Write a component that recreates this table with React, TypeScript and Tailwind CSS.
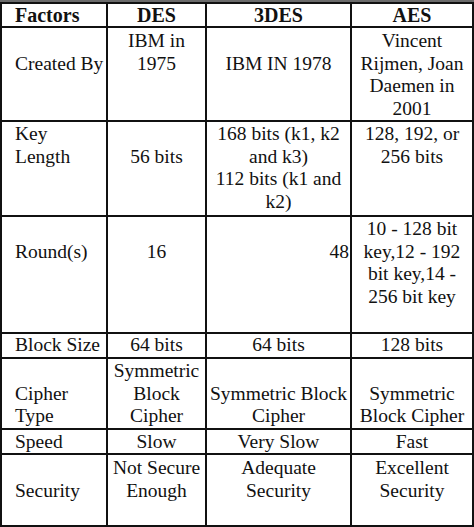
import React from "react";

type Cell = { lines: string[]; align?: "left" | "center" | "right" };
type Row = { pad: string; cells: Cell[]; header?: boolean };

const L = (...lines: string[]): Cell => ({ lines, align: "left" });
const C = (...lines: string[]): Cell => ({ lines, align: "center" });
const R = (...lines: string[]): Cell => ({ lines, align: "right" });

const rows: Row[] = [
  { pad: "pt-0", header: true, cells: [L("Factors"), C("DES"), C("3DES"), C("AES")] },
  {
    pad: "pt-[2px]",
    cells: [
      L("", "Created By"),
      C("IBM in", "1975"),
      C("", "IBM IN 1978"),
      C("Vincent", "Rijmen, Joan", "Daemen in", "2001"),
    ],
  },
  {
    pad: "pt-[1px]",
    cells: [
      L("Key", "Length"),
      C("", "56 bits"),
      C("168 bits (k1, k2", "and k3)", "112 bits (k1 and", "k2)"),
      C("128, 192, or", "256 bits"),
    ],
  },
  {
    pad: "pt-[1px]",
    cells: [
      L("", "Round(s)"),
      C("", "16"),
      R("", "48"),
      C("10 - 128 bit", "key,12 - 192", "bit key,14 -", "256 bit key"),
    ],
  },
  { pad: "pt-0", cells: [L("Block Size"), C("64 bits"), C("64 bits"), C("128 bits")] },
  {
    pad: "pt-[1px]",
    cells: [
      L("", "Cipher", "Type"),
      C("Symmetric", "Block", "Cipher"),
      C("", "Symmetric Block", "Cipher"),
      C("", "Symmetric", "Block Cipher"),
    ],
  },
  { pad: "pt-[1px]", cells: [L("Speed"), C("Slow"), C("Very Slow"), C("Fast")] },
  {
    pad: "pt-[2px]",
    cells: [
      L("", "Security"),
      C("Not Secure", "Enough"),
      C("Adequate", "Security"),
      C("Excellent", "Security"),
    ],
  },
];

const alignClass = {
  left: "text-left pl-[13px]",
  center: "text-center",
  right: "text-right pr-[1px]",
};

export default function App() {
  return (
    <div className="w-[474px] h-[527px] bg-white overflow-hidden">
      <div className="h-[2px] bg-[#6b6b6b]" />
      <div
        className="grid grid-cols-[104px_97px_143px_120px] grid-rows-[22px_92px_93px_115px_23px_69px_23px_70px] gap-[2px] p-[2px] bg-[#111]"
        style={{ fontFamily: '"Liberation Serif", "Times New Roman", serif' }}
      >
        {rows.map((row, ri) =>
          row.cells.map((cell, ci) => (
            <div
              key={`${ri}-${ci}`}
              className={`bg-white overflow-hidden text-[#111] text-[19.5px] leading-[22.7px] ${row.pad} ${
                alignClass[cell.align ?? "center"]
              } ${row.header ? "font-bold text-[20px]" : ""}`}
            >
              {cell.lines.map((line, li) => (
                <div key={li} className="whitespace-nowrap">
                  {line === "" ? "\u00a0" : line}
                </div>
              ))}
            </div>
          ))
        )}
      </div>
    </div>
  );
}
